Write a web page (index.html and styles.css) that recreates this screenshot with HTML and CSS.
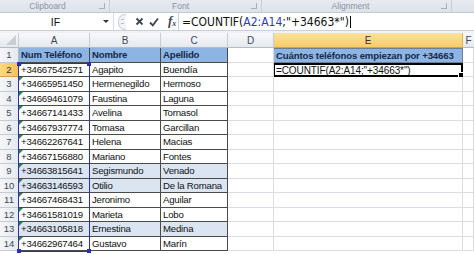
FILE: index.html
```html
<!DOCTYPE html>
<html>
<head>
<meta charset="utf-8">
<link rel="stylesheet" href="styles.css">
</head>
<body>
<div class="ribbon">
  <div class="grp g1"><span>Clipboard</span><i class="launch"></i></div>
  <div class="grp g2"><span>Font</span><i class="launch"></i></div>
  <div class="grp g3"><span>Alignment</span><i class="launch"></i></div>
  <div class="grp g4"></div>
</div>
<div class="fbar">
  <div class="namebox"><span class="nm">IF</span><span class="dd"></span></div>
  <div class="grip"><i></i></div>
  <div class="ficons">
    <svg class="ix" width="9" height="9" viewBox="0 0 9 9"><path d="M1.5 1.5 L7.5 7.5 M7.5 1.5 L1.5 7.5" stroke="#3c4656" stroke-width="1.8" fill="none"/></svg>
    <svg class="iv" width="10" height="10" viewBox="0 0 10 10"><path d="M1 5.5 L3.8 8.3 L9 1.5" stroke="#3c4656" stroke-width="1.8" fill="none"/></svg>
    <span class="fx">f<sub>x</sub></span>
  </div>
  <div class="finput">=COUNTIF(<span class="ref">A2:A14</span>;"+34663*")<span class="caret"></span></div>
</div>
<div class="gap"></div>
<div class="sheet">
  <div class="ch corner"><svg width="12" height="12" viewBox="0 0 12 12"><path d="M11 1 L11 11 L1 11 Z" fill="#c9ced6"/></svg></div>
  <div class="ch">A</div><div class="ch">B</div><div class="ch">C</div><div class="ch">D</div><div class="ch sel">E</div><div class="ch last">F</div>

  <div class="rh">1</div><div class="c t hd">Num Teléfono</div><div class="c t hd">Nombre</div><div class="c t hd">Apellido</div><div class="c"></div><div class="c hd e1">Cuántos teléfonos empiezan por +34663</div><div class="c"></div>
  <div class="rh rsel">2</div><div class="c t a">+34667542571</div><div class="c t">Agapito</div><div class="c t">Buendía</div><div class="c"></div><div class="c active">=COUNTIF(A2:A14;"+34663*")<i class="handle"></i></div><div class="c"></div>
  <div class="rh">3</div><div class="c t a">+34665951450</div><div class="c t">Hermenegildo</div><div class="c t">Hermoso</div><div class="c"></div><div class="c"></div><div class="c"></div>
  <div class="rh">4</div><div class="c t a">+34669461079</div><div class="c t">Faustina</div><div class="c t">Laguna</div><div class="c"></div><div class="c"></div><div class="c"></div>
  <div class="rh">5</div><div class="c t a">+34667141433</div><div class="c t">Avelina</div><div class="c t">Tornasol</div><div class="c"></div><div class="c"></div><div class="c"></div>
  <div class="rh">6</div><div class="c t a">+34667937774</div><div class="c t">Tomasa</div><div class="c t">Garcillan</div><div class="c"></div><div class="c"></div><div class="c"></div>
  <div class="rh">7</div><div class="c t a">+34662267641</div><div class="c t">Helena</div><div class="c t">Macias</div><div class="c"></div><div class="c"></div><div class="c"></div>
  <div class="rh">8</div><div class="c t a">+34667156880</div><div class="c t">Mariano</div><div class="c t">Fontes</div><div class="c"></div><div class="c"></div><div class="c"></div>
  <div class="rh">9</div><div class="c t a lb">+34663815641</div><div class="c t lb">Segismundo</div><div class="c t lb">Venado</div><div class="c"></div><div class="c"></div><div class="c"></div>
  <div class="rh">10</div><div class="c t a lb">+34663146593</div><div class="c t lb">Otilio</div><div class="c t lb">De la Romana</div><div class="c"></div><div class="c"></div><div class="c"></div>
  <div class="rh">11</div><div class="c t a">+34667468431</div><div class="c t">Jeronimo</div><div class="c t">Aguilar</div><div class="c"></div><div class="c"></div><div class="c"></div>
  <div class="rh">12</div><div class="c t a">+34661581019</div><div class="c t">Marieta</div><div class="c t">Lobo</div><div class="c"></div><div class="c"></div><div class="c"></div>
  <div class="rh">13</div><div class="c t a lb">+34663105818</div><div class="c t lb">Ernestina</div><div class="c t lb">Medina</div><div class="c"></div><div class="c"></div><div class="c"></div>
  <div class="rh">14</div><div class="c t a">+34662967464</div><div class="c t">Gustavo</div><div class="c t">Marín</div><div class="c"></div><div class="c"></div><div class="c"></div>

  <div class="range"><i class="k tl"></i><i class="k tr"></i><i class="k bl"></i><i class="k br"></i></div>
</div>
</body>
</html>
```
FILE: styles.css
```css
html, body { margin: 0; padding: 0; }
body {
  width: 474px; height: 254px; overflow: hidden;
  background: #fff;
  font-family: "Liberation Sans", sans-serif;
  color: #111;
}
.ribbon {
  height: 12px;
  display: flex;
  background: linear-gradient(#e7ebf1, #dde3eb);
  border-bottom: 1px solid #c3cad4;
}
.grp {
  position: relative;
  display: flex; align-items: center; justify-content: center;
  font-size: 8.5px; color: #8a93a0;
  border-right: 1px solid #c8ced8;
  box-sizing: border-box;
}
.g1 { width: 110px; }
.g2 { width: 152px; }
.g3 { width: 190px; }
.g4 { flex: 1; border-right: none; }
.g1 span { margin-right: 14px; }
.g2 span { margin-right: 10px; }
.g3 span { margin-right: 12px; }
.launch {
  position: absolute; right: 4px; top: 3px;
  width: 5px; height: 5px;
  border-right: 1px solid #a9b0bb; border-bottom: 1px solid #a9b0bb;
}
.fbar {
  height: 18px;
  display: flex; align-items: center;
  background: #fff;
  border-bottom: 1px solid #c9d0da;
  box-sizing: border-box;
}
.namebox {
  width: 114px; height: 17px;
  display: flex; align-items: center;
  border-right: 1px solid #d6dbe2;
  box-sizing: border-box;
  font-size: 10.5px;
}
.nm { flex: 1; text-align: center; padding-left: 8px; }
.dd {
  width: 0; height: 0; margin-right: 4px;
  border-left: 3px solid transparent; border-right: 3px solid transparent;
  border-top: 3px solid #333;
}
.grip {
  width: 7px; height: 14px; margin-left: 4px;
  border: 1px solid #c9d0da; border-right: none;
  border-radius: 7px 0 0 7px;
  background: #f1f3f6;
  display: flex; align-items: center; justify-content: center;
}
.grip i { width: 3px; height: 3px; border-top: 1px solid #b5bcc6; border-bottom: 1px solid #b5bcc6; }
.ficons {
  width: 52px; display: flex; align-items: center;
  box-sizing: border-box;
}
.ix { margin-left: 9px; }
.iv { margin-left: 5px; }
.fx {
  margin-left: 9px;
  font-family: "Liberation Serif", serif; font-style: italic; font-weight: bold;
  font-size: 13px; line-height: 13px; color: #3c4656;
}
.fx sub { font-size: 8px; vertical-align: baseline; position: relative; top: 1px; }
.finput {
  flex: 1; height: 17px;
  display: flex; align-items: center;
  padding-left: 3px;
  border-left: 1px solid #c9d0da;
  font-family: "DejaVu Sans Condensed", "Liberation Sans", sans-serif;
  font-size: 12px;
}
.ref { color: #2e3ab8; }
.caret { width: 1px; height: 12px; background: #000; margin-left: 1px; }
.gap { height: 2px; background: #eef1f5; }
.sheet {
  position: relative;
  display: grid;
  grid-template-columns: 19px 71px 71px 67px 46px 189px 11px;
  grid-template-rows: 15px repeat(15, 14.5px);
  font-size: 9.6px;
  letter-spacing: -0.2px;
}
.ch {
  background: linear-gradient(#f7f8fa, #e5e9ee);
  border-right: 1px solid #c6ccd4;
  border-bottom: 1px solid #b3bbc6;
  box-sizing: border-box;
  display: flex; align-items: center; justify-content: center;
  font-size: 10px; color: #3f4957; letter-spacing: 0;
}
.ch.corner { justify-content: flex-end; align-items: flex-end; padding: 0 1px 1px 0; }
.ch.sel {
  background: linear-gradient(#fbe39c, #f6cc6a);
  border-right-color: #e4b24c; border-bottom-color: #d9a23d;
  color: #333;
}
.ch.last { border-right: none; }
.rh {
  background: linear-gradient(90deg, #f4f6f8, #e6eaef);
  border-right: 1px solid #b3bbc6;
  border-bottom: 1px solid #c6ccd4;
  box-sizing: border-box;
  display: flex; align-items: center; justify-content: center;
  font-size: 9.5px; color: #3f4957; letter-spacing: 0;
}
.rh.rsel {
  background: linear-gradient(90deg, #fbd97e, #f5c25a);
  border-bottom-color: #dba446;
  color: #333;
}
.c {
  position: relative;
  border-right: 1px solid #dadcdf;
  border-bottom: 1px solid #dadcdf;
  box-sizing: border-box;
  padding-left: 2px;
  line-height: 14px;
  white-space: nowrap;
}
.c.t { border-right-color: #4a4a4a; border-bottom-color: #4a4a4a; }
.c.hd {
  background: #8db4e2;
  font-weight: bold;
  color: #152a48;
}
.c.e1 { border: 1px solid #6d7f97; border-left: none; letter-spacing: -0.15px; }
.c.lb { background: #dbe5f1; }
.c.a::before {
  content: ""; position: absolute; left: 0; top: 0;
  border-top: 4px solid #1f8a3c; border-right: 4px solid transparent;
}
.c.active {
  border: 2px solid #000;
  border-left-width: 1px;
  line-height: 11px;
  padding-left: 1px;
  font-size: 10px;
  letter-spacing: -0.1px;
}
.handle {
  position: absolute; right: -3px; bottom: -3px;
  width: 4px; height: 4px; background: #000; border: 1px solid #fff;
}
.range {
  position: absolute;
  left: 18px; top: 29.5px;
  width: 72px; height: 189px;
  border: 1px solid #2a2fb8;
  box-sizing: border-box;
  pointer-events: none;
}
.k { position: absolute; width: 4px; height: 4px; background: #2a2fb8; }
.tl { left: -2px; top: -2px; }
.tr { right: -2px; top: -2px; }
.bl { left: -2px; bottom: -2px; }
.br { right: -2px; bottom: -2px; }
```
